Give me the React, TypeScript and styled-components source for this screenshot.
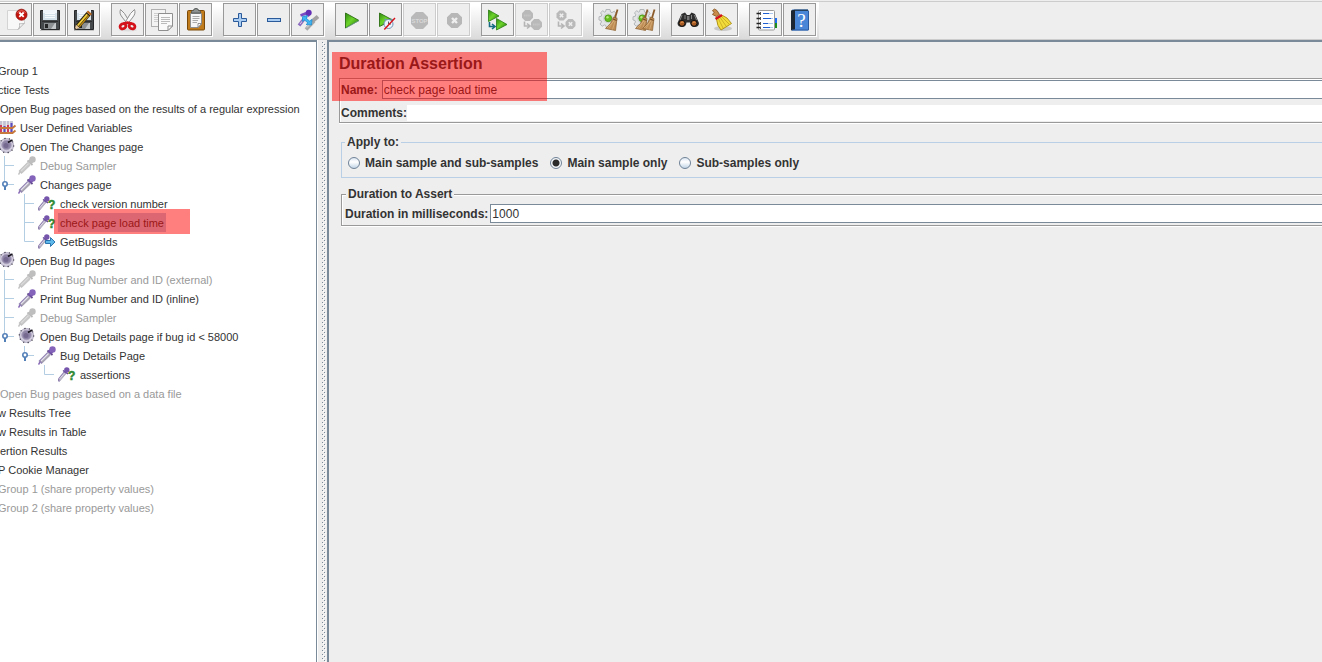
import React, { useId, useState } from 'react';
import styled, { createGlobalStyle, css } from 'styled-components';

const GlobalStyle = createGlobalStyle`
  * { box-sizing: border-box; }
  html, body, #root { height: 100%; }
  body {
    margin: 0;
    overflow: hidden;
    background: #eeeeee;
    color: #333333;
    font-family: 'Liberation Sans', Arial, sans-serif;
    font-size: 12px;
  }
`;

/* ---------- layout ---------- */

const Window = styled.div`
  display: flex;
  flex-direction: column;
  height: 100vh;
  overflow: hidden;
`;

const ToolbarStrip = styled.header`
  display: flex;
  flex: none;
  height: 40px;
  padding-top: 1px;
  border-bottom: 1px solid #cccccc;
`;

const ToolbarEdge = styled.div`
  display: flex;
  flex: 1;
  border-top: 1px solid #cccccc;
`;

const Toolbar = styled.div`
  display: flex;
  gap: 11px;
  margin-left: -1px;
  padding: 1px 3px 0 0;
  background: linear-gradient(#ffffff 10%, #dadada);
`;

const ToolGroup = styled.div`
  display: flex;
  gap: 1px;
`;

const ToolButton = styled.button`
  display: block;
  width: 33px;
  height: 33px;
  padding: 0;
  border: 1px solid #999999;
  background: #eeeeee;
  box-shadow: 1px 1px 0 #ffffff;

  &:disabled { border-color: #cccccc; }
  svg { display: block; }
`;

const Workspace = styled.div`
  display: flex;
  flex: 1;
  min-height: 0;
`;

const TreePane = styled.nav`
  width: 317px;
  flex: none;
  padding-top: 19px;
  overflow: hidden;
  background: #ffffff;
  border-top: 2px solid #7a8a99;
  border-right: 1px solid #7a8a99;
`;

const Divider = styled.div`
  flex: none;
  width: 10px;
  padding: 2px 2px 0 4px;
  border-left: 1px solid #ffffff;
  svg { display: block; width: 4px; height: 100%; }
`;

const EditorPane = styled.main`
  position: relative;
  flex: 1;
  min-width: 0;
  overflow: hidden;
  padding: 13px 0 0 10px;
  border-top: 2px solid #7a8a99;
  border-left: 2px solid #7a8a99;
`;

/* ---------- tree ---------- */

const TreeList = styled.ul`
  margin: 0;
  padding: 0;
  list-style: none;
`;

const TreeRow = styled.li`
  position: relative;
  display: flex;
  height: 19px;
  margin-left: -2px;
  svg { display: block; flex: none; }
`;

const TreeLabel = styled.span<{ $dim?: boolean; $selected?: boolean; $clipped?: boolean }>`
  padding: 1px 2px 0 ${p => (p.$clipped ? 0 : 2)}px;
  font-size: 11px;
  line-height: 18px;
  white-space: nowrap;
  color: ${p => (p.$dim ? '#999999' : '#333333')};
  background: ${p => (p.$selected ? '#b8cfe5' : 'transparent')};
`;

const Marker = styled.div<{ $place: 'tree' | 'form' }>`
  position: absolute;
  pointer-events: none;
  background: rgba(255, 0, 0, 0.5);
  ${p => p.$place === 'tree'
    ? css`left: 56px; top: -4px; width: 136px; height: 25px;`
    : css`left: 3px; top: 10px; width: 215px; height: 49px;`}
`;

/* ---------- form ---------- */

const Title = styled.h1`
  margin: 0 0 5px;
  font-size: 16px;
  line-height: 18px;
  font-weight: bold;
`;

const Form = styled.form`
  margin-right: -8px;
  font-weight: bold;
`;

const NameBox = styled.div`
  display: flex;
  flex-direction: column;
  gap: 6px;
  padding: 1px;
  border: 1px solid #999999;
  box-shadow: 0 1px 0 #ffffff, inset 1px 1px 0 #ffffff;
`;

const Line = styled.div<{ $gap: number }>`
  display: flex;
  align-items: center;
  gap: ${p => p.$gap}px;
`;

const TextInput = styled.input<{ $bare?: boolean }>`
  flex: 1;
  min-width: 0;
  height: ${p => (p.$bare ? 16 : 19)}px;
  padding: 0 1px;
  border: ${p => (p.$bare ? '0' : '1px solid #7a8a99')};
  border-radius: 0;
  outline: 0;
  background: #ffffff;
  color: #333333;
  font: 12px 'Liberation Sans', Arial, sans-serif;
`;

const Group = styled.fieldset<{ $etched?: boolean }>`
  min-width: 0;
  margin: ${p => (p.$etched ? '9px 0 0 2px' : '12px 0 0 2px')};
  padding: ${p => (p.$etched ? '3px 3px 2px' : '7px 6px 7px')};
  border: 1px solid ${p => (p.$etched ? '#999999' : '#b8cfe5')};
  ${p => p.$etched && css`box-shadow: 0 1px 0 #ffffff, inset 1px 1px 0 #ffffff;`}
`;

const Legend = styled.legend<{ $inset: number }>`
  margin-left: ${p => p.$inset}px;
  padding: 0 2px;
  line-height: 14px;
  background: #eeeeee;
`;

const RadioRow = styled.div`
  display: flex;
  gap: 12px;
`;

const RadioLabel = styled.label`
  display: flex;
  align-items: center;
  gap: 5px;
  line-height: 14px;
`;

const Radio = styled.input`
  appearance: none;
  width: 12px;
  height: 12px;
  margin: 0;
  border: 1px solid #6f8296;
  border-radius: 50%;
  background: linear-gradient(#dbe6f2, #ffffff 40%, #c2d5e8);

  &:checked {
    background: radial-gradient(circle, #2b2b2b 3px, #f4f7fa 4px);
  }
`;

/* ---------- toolbar drawings ---------- */

const Art = ({ children }: { children: React.ReactNode }) => (
  <svg width="31" height="31" viewBox="0 0 31 31" fill="none" aria-hidden="true">{children}</svg>
);

const GreenGradient = ({ id }: { id: string }) => (
  <linearGradient id={id} x1="0" y1="0" x2="1" y2="1">
    <stop offset="0" stopColor="#2f8a10" />
    <stop offset="0.45" stopColor="#6cd42a" />
    <stop offset="1" stopColor="#1d6a08" />
  </linearGradient>
);

const NewDoc = () => (
  <Art>
    <path d="M7.500 6.500H24.500V19L18 25.500H7.500Z" fill="#f8f8f8" stroke="#d4d4d4" />
    <path d="M24.500 19C23 20 21 20 19.500 19.500C20 22 19.500 24 18 25.500Z" fill="#ffffff" stroke="#b5b5b5" />
    <circle cx="21.500" cy="10.700" r="5.500" fill="#c4140c" stroke="#8e0d08" strokeWidth="0.800" />
    <path d="M17.500 8.500Q21.500 5 25.500 8.500" stroke="#e8776f" />
    <path d="M19.300 8.500L23.700 12.900M23.700 8.500L19.300 12.900" stroke="#ffffff" strokeWidth="1.800" />
  </Art>
);

const FloppyShape = () => (
  <>
    <path d="M6.500 6.500H25.500V25.500H7.500L6.500 24.500Z" fill="#46494c" stroke="#26282a" />
    <rect x="9" y="6" width="14" height="10" fill="#d5e2ec" />
    <rect x="9" y="6" width="14" height="3" fill="#eff5fa" />
    <path d="M11 9.500H21M11 11.500H21M11 13.500H21" stroke="#f6fafc" />
    <path d="M8 17.500H24" stroke="#2c2e30" />
    <rect x="10" y="19" width="12" height="6" fill="#8d9093" />
    <path d="M17 25L21 19H22V25Z" fill="#c4c7c9" />
    <rect x="11" y="20" width="3" height="4" fill="#222426" />
    <path d="M6 26.500H26" stroke="#c4c4c4" />
  </>
);

const Pencil = () => (
  <>
    <path d="M6.500 26L8 20.500L18.500 8L22.500 11.500L12 23.500Z" fill="#2c2410" />
    <path d="M9 21L18.500 9.700L20 11L10.200 22.300Z" fill="#f4cf3a" />
    <path d="M10.700 22.600L20.300 11.200L21.300 12L12 23Z" fill="#c08a14" />
    <path d="M18.500 8L20 6.500L24 10L22.500 11.500Z" fill="#b5651d" />
    <path d="M6.500 26L8 20.800L11.500 23.700Z" fill="#e8c9a0" />
    <path d="M6.300 26.300L7 24L8.700 25.300Z" fill="#222222" />
  </>
);

const Scissors = () => (
  <Art>
    <ellipse cx="16" cy="26" rx="9" ry="1.500" fill="#dddddd" />
    <path d="M8.500 5.500C7.500 8 8 10.500 10 13L15.500 20L18 18.500L12.500 9.500Z" fill="#f2f2f2" stroke="#8f8f8f" />
    <path d="M22.500 5.500C23.500 8 23 10.500 21 13L15.500 20L13 18.500L18.500 9.500Z" fill="#fafafa" stroke="#8f8f8f" />
    <ellipse cx="11" cy="22.300" rx="3" ry="2.500" transform="rotate(-25 11 22.300)" stroke="#d3121a" strokeWidth="2.800" />
    <ellipse cx="20" cy="22.300" rx="3" ry="2.500" transform="rotate(25 20 22.300)" stroke="#d3121a" strokeWidth="2.800" />
    <path d="M11.500 19.500L15.500 18.500L19.500 19.500" stroke="#d3121a" strokeWidth="2.600" />
  </Art>
);

const Copy = () => (
  <Art>
    <rect x="5.500" y="5.500" width="14" height="17" fill="#f4f4f4" stroke="#b0b0b0" />
    <path d="M8 9.500H17M8 11.500H17M8 13.500H12M8 15.500H12M8 17.500H12" stroke="#cfcfcf" />
    <path d="M12.500 9.500H26.500V22L22 26.500H12.500Z" fill="#fafafa" stroke="#8f8f8f" />
    <path d="M15 13.500H24M15 15.500H24M15 17.500H24M15 19.500H21" stroke="#bbbbbb" />
    <path d="M26.500 22H22V26.500Z" fill="#ffffff" stroke="#8f8f8f" />
  </Art>
);

const Paste = () => (
  <Art>
    <rect x="7.500" y="6.500" width="17" height="19.500" rx="1" fill="#c07c1c" stroke="#7c4a08" />
    <path d="M10.500 9.500H21.500V20L18 23.500H10.500Z" fill="#f6f6f6" stroke="#8d8d8d" />
    <path d="M12.500 12.500H19.500M12.500 14.500H19.500M12.500 16.500H18M12.500 18.500H17" stroke="#aaaaaa" />
    <path d="M21.500 19.500H18V23.500Z" fill="#ffffff" stroke="#777777" strokeWidth="0.800" />
    <path d="M11.500 9V7.500Q11.500 6.500 13.500 6.500Q13.500 4.500 16 4.500Q18.500 4.500 18.500 6.500Q20.500 6.500 20.500 7.500V9Z" fill="#8e9290" stroke="#565a58" />
  </Art>
);

const Plus = () => (
  <Art>
    <path d="M14.500 9.500H17.500V14.500H22.500V17.500H17.500V22.500H14.500V17.500H9.500V14.500H14.500Z" fill="#a9cdf2" stroke="#2a5a9a" />
  </Art>
);

const Minus = () => (
  <Art><rect x="9.500" y="14.500" width="13" height="3" fill="#a9cdf2" stroke="#2a5a9a" /></Art>
);

const Toggle = () => (
  <Art>
    <path d="M7 21.500L14 12.500" stroke="#8d6dc0" strokeWidth="3.400" />
    <path d="M8 20L13 14" stroke="#d9cdea" />
    <path d="M8.500 11.500L13.500 9.500L17.500 12" stroke="#7a4cc4" strokeWidth="2.600" />
    <circle cx="16.700" cy="8.700" r="3" fill="#6330b5" />
    <path d="M14 25.500L22 17" stroke="#a9a9a9" strokeWidth="3.600" />
    <path d="M15 23.500L20 18" stroke="#dedede" />
    <path d="M20 17.500L26 12.500" stroke="#a2a2a2" strokeWidth="4" />
    <path d="M10.500 12.500L15.500 11.500L14.500 14.500L17.500 17L20 15.500L19.500 21L14 20.500L16 19L12.500 16L10.500 17.500Z" fill="#3cb4f2" stroke="#1787cf" strokeWidth="0.700" />
  </Art>
);

const Play = () => {
  const id = useId();
  return (
    <Art>
      <defs><GreenGradient id={id} /></defs>
      <path d="M9.500 9L23 16.500L9.500 24Z" fill={`url(#${id})`} stroke="#2a6d12" strokeWidth="0.900" strokeLinejoin="round" />
      <path d="M23 16.500L10 24" stroke="#88b4c0" strokeWidth="0.600" />
    </Art>
  );
};

const PlayNoTimers = () => {
  const id = useId();
  return (
    <Art>
      <defs><GreenGradient id={id} /></defs>
      <path d="M9.500 9L22.500 16L9.500 22.500Z" fill={`url(#${id})`} stroke="#2a6d12" strokeWidth="0.900" strokeLinejoin="round" />
      <circle cx="18.500" cy="20" r="4.500" fill="#eef4fb" stroke="#6d93b8" />
      <path d="M14.500 16L16 15M21 15L22.500 16" stroke="#6d93b8" strokeWidth="1.500" />
      <path d="M18.500 17.500V20H21" stroke="#333333" strokeWidth="0.800" />
      <path d="M14.300 25.500L25 14" stroke="#d8121a" strokeWidth="1.400" />
    </Art>
  );
};

const octagon = (cx: number, cy: number, r: number) => {
  const k = r * 0.42;
  return `M${cx - k} ${cy - r}H${cx + k}L${cx + r} ${cy - k}V${cy + k}L${cx + k} ${cy + r}H${cx - k}L${cx - r} ${cy + k}V${cy - k}Z`;
};

const StopArt = () => (
  <Art>
    <path d={octagon(15.5, 16.5, 8.5)} fill="#b9b9b9" />
    <text x="15.500" y="19" textAnchor="middle" fontSize="6" fontWeight="bold" fill="#d8d8d8" fontFamily="Liberation Sans">STOP</text>
  </Art>
);

const Shutdown = () => (
  <Art>
    <path d={octagon(16.5, 16.5, 7.5)} fill="#b7b7b7" />
    <path d="M14 14L19 19M19 14L14 19" stroke="#eeeeee" strokeWidth="2.400" />
  </Art>
);

const ElbowArrow = ({ color, x = 7.5, y = 18 }: { color: string; x?: number; y?: number }) => (
  <path d={`M${x} ${y}V${y + 4.5}H${x + 5}M${x + 2.5} ${y + 2}L${x + 5.5} ${y + 4.5}L${x + 2.5} ${y + 7}`} stroke={color} strokeWidth="1.600" />
);

const RemoteStart = () => {
  const id = useId();
  return (
    <Art>
      <defs><GreenGradient id={id} /></defs>
      <path d="M6.500 6L17 12L6.500 17.500Z" fill={`url(#${id})`} stroke="#2a7d12" strokeWidth="0.800" />
      <path d="M14.500 14.500L25 20.500L14.500 26Z" fill={`url(#${id})`} stroke="#2a7d12" strokeWidth="0.800" />
      <ElbowArrow color="#156b80" />
    </Art>
  );
};

const RemoteStop = () => (
  <Art>
    <path d={octagon(11.5, 11.5, 5.5)} fill="#b9b9b9" />
    <path d={octagon(20.5, 20.5, 5.5)} fill="#b9b9b9" />
    <path d="M8 11.500H15M17 20.500H24" stroke="#c6c6c6" strokeWidth="2" strokeDasharray="1.500 0.600" />
    <ElbowArrow color="#b5b5b5" x={8.5} y={17.5} />
  </Art>
);

const RemoteShutdown = () => (
  <Art>
    <path d={octagon(11.5, 11.5, 5)} fill="#b9b9b9" />
    <path d={octagon(20.5, 20, 5)} fill="#b9b9b9" />
    <path d="M9.800 9.800L13.200 13.200M13.200 9.800L9.800 13.200M18.800 18.300L22.200 21.700M22.200 18.300L18.800 21.700" stroke="#eeeeee" strokeWidth="1.600" />
    <ElbowArrow color="#b5b5b5" x={8.5} y={17.5} />
  </Art>
);

const Gear = () => (
  <>
    <path
      d="M12 5.500H16L16.500 8L18 8.600L20.300 7.200L22 9.500L20.600 11.500L21 13L23 13.500V16L20.800 16.600L20 18.300L21.300 20.300L19 22.500L17 21L15.800 21.500L15.300 23.500H12.300L11.800 21.500L10.300 20.900L8.200 22.300L6 20L7.500 18L7 16.500L5 16V12.800L7.200 12.300L7.800 10.800L6.500 8.800L8.800 6.700L10.600 8.100L11.600 7.600Z"
      fill="#e2e4e5" stroke="#b3b6b8"
    />
    <circle cx="14" cy="14.300" r="5" fill="#d0d3d4" />
    <circle cx="14.300" cy="14.300" r="3.400" fill="#66bd1e" stroke="#4a9412" strokeWidth="0.800" />
    <circle cx="13.500" cy="13.300" r="1.200" fill="#b7ea7c" />
  </>
);

const BroomHead = () => (
  <>
    <path d="M23.500 5.500L21 14" stroke="#8b5a2b" strokeWidth="1.800" />
    <path d="M19.500 13L23 14.500L21.500 26.500L11.500 24.500Q17.500 20 19.500 13Z" fill="#bd8d55" stroke="#8a5d2c" strokeWidth="0.700" />
    <path d="M20.500 15L15 24.500M21.500 16L18.500 25.500M20 17L13 24" stroke="#dbb27c" strokeWidth="0.700" />
    <path d="M19 15L22.500 16.500" stroke="#6d441c" />
  </>
);

const Clear = () => <Art><Gear /><BroomHead /></Art>;
const ClearAll = () => (
  <Art>
    <Gear />
    <g transform="translate(-4 0)"><BroomHead /></g>
    <g transform="translate(3 0)"><BroomHead /></g>
  </Art>
);

const Binoculars = () => (
  <Art>
    <path d="M9.500 10L13 8.500L15 11H17.500L19.500 8.500L23 10L27 19Q27 23 22.500 23Q18.500 23 18 18.500H14.500Q14 23 10 23Q5.500 23 5.500 19Z" fill="#2e2e2e" />
    <path d="M10 11L8 16M22.500 11L24.500 16M13 11V15M19.500 11V15" stroke="#858585" />
    <circle cx="10" cy="19.300" r="3" fill="#a65a22" stroke="#111111" />
    <circle cx="22" cy="19.300" r="3" fill="#a65a22" stroke="#111111" />
    <path d="M8.500 19Q10 17 11.500 18.500M20.500 19Q22 17 23.500 18.500" stroke="#e89a55" />
    <rect x="15" y="12" width="2.500" height="4" fill="#777777" />
  </Art>
);

const Sweep = () => (
  <Art>
    <ellipse cx="17" cy="24.500" rx="9" ry="2.500" fill="#c8c8c8" />
    <path d="M6.500 6.500L8.500 5L11 6.500L13.500 10.500L10.500 12.500L6.500 10.500L8 8.500Z" fill="#c98b4a" stroke="#7f4f1c" strokeWidth="0.800" />
    <path d="M10.500 15L16.500 11.500L21 14L25.500 19.500L15 26Q11 22 10.500 15Z" fill="#f2dc3c" stroke="#a98b10" strokeWidth="0.900" />
    <path d="M12.500 15L17 24M14.500 14L20 22M16 13L23 20" stroke="#c3a51e" strokeWidth="0.800" />
    <path d="M9.500 15L16 11" stroke="#d3121a" strokeWidth="2.600" />
  </Art>
);

const ListArt = () => (
  <Art>
    <rect x="24" y="14" width="3" height="5" fill="#1e6cf0" />
    <rect x="24" y="19" width="3" height="5" fill="#1c8c1c" />
    <rect x="8.500" y="6.500" width="16" height="19.500" rx="1" fill="#ffffff" stroke="#9a9a9a" />
    <path d="M13 9.500H23M13 14.500H23M13 19.500H23M13 23.500H23" stroke="#aac6ee" />
    <path d="M13 9.500H19M13 14.500H21M13 19.500H18M13 23.500H20" stroke="#1f5fd0" strokeWidth="1.200" />
    <path d="M6.500 9.500H10M6.500 14.500H10M6.500 19.500H10M6.500 23.500H10" stroke="#222222" strokeWidth="1.500" />
    <path d="M10.500 8V11M10.500 13V16M10.500 18V21M10.500 22.500V25" stroke="#555555" />
  </Art>
);

const HelpArt = () => (
  <Art>
    <path d="M8 5.500H24V26.500H8Z" fill="#4a86d8" />
    <path d="M7 6.500L11 5.500V25.500L7 26.500Z" fill="#1c2733" />
    <path d="M11 5.500H24V7H11Z" fill="#23415f" />
    <path d="M8 26H24.500V6.500" stroke="#2b5aa0" />
    <text x="17.500" y="22.500" textAnchor="middle" fontSize="19" fill="#ffffff" fontFamily="Liberation Serif">?</text>
  </Art>
);

type Tool = { name: string; art: React.ReactNode; off?: boolean };

const toolGroups: Tool[][] = [
  [
    { name: 'Close', art: <NewDoc /> },
    { name: 'Save', art: <Art><FloppyShape /></Art> },
    { name: 'Save as', art: <Art><FloppyShape /><Pencil /></Art> },
  ],
  [
    { name: 'Cut', art: <Scissors /> },
    { name: 'Copy', art: <Copy /> },
    { name: 'Paste', art: <Paste /> },
  ],
  [
    { name: 'Expand all', art: <Plus /> },
    { name: 'Collapse all', art: <Minus /> },
    { name: 'Toggle', art: <Toggle /> },
  ],
  [
    { name: 'Start', art: <Play /> },
    { name: 'Start no pauses', art: <PlayNoTimers /> },
    { name: 'Stop', art: <StopArt />, off: true },
    { name: 'Shutdown', art: <Shutdown />, off: true },
  ],
  [
    { name: 'Remote start all', art: <RemoteStart /> },
    { name: 'Remote stop all', art: <RemoteStop />, off: true },
    { name: 'Remote shutdown all', art: <RemoteShutdown />, off: true },
  ],
  [
    { name: 'Clear', art: <Clear /> },
    { name: 'Clear all', art: <ClearAll /> },
  ],
  [
    { name: 'Search', art: <Binoculars /> },
    { name: 'Reset search', art: <Sweep /> },
  ],
  [
    { name: 'Function helper', art: <ListArt /> },
    { name: 'Help', art: <HelpArt /> },
  ],
];

/* ---------- tree drawings ---------- */

type GuideKind = 'blank' | 'tee' | 'end' | 'handle';

const Guide = ({ kind }: { kind: GuideKind }) => (
  <svg width="20" height="19" viewBox="0 0 20 19" fill="none" aria-hidden="true">
    {kind === 'tee' && <path d="M6.500 0V19M6.500 9.500H16" stroke="#b3cde3" />}
    {kind === 'end' && <path d="M6.500 0V9.500H16" stroke="#b3cde3" />}
    {kind === 'handle' && (
      <>
        <path d="M6.500 0V7M9 9.500H16" stroke="#b3cde3" />
        <circle cx="7" cy="9" r="2.200" fill="#ffffff" stroke="#5480b8" strokeWidth="1.600" />
        <path d="M7 11V15" stroke="#5480b8" strokeWidth="2" />
      </>
    )}
  </svg>
);

const Dropper = ({ gray }: { gray?: boolean }) => (
  <>
    <path d="M0.500 18.500L2 16" stroke={gray ? '#c4c4c4' : '#8a6db8'} strokeWidth="1.500" />
    <path d="M2 16.500L11 7.500" stroke={gray ? '#c2c2c2' : '#8f7fb0'} strokeWidth="4.200" />
    <path d="M3.500 16L11.500 8.500" stroke={gray ? '#c8c8c8' : '#aaa6b2'} strokeWidth="2.600" />
    <path d="M3 15L10.500 7.500" stroke={gray ? '#dadada' : '#e6e2ee'} strokeWidth="1.200" />
    <path d="M9.500 4.500L14.500 9" stroke={gray ? '#b6b6b6' : '#5d4688'} strokeWidth="1.800" />
    <path d="M11.500 7L14.500 3.500" stroke={gray ? '#bcbcbc' : '#7352a8'} strokeWidth="4.500" />
    <circle cx="14.500" cy="3.400" r="3.200" fill={gray ? '#bebebe' : '#8464bb'} />
  </>
);

const MiniDropper = () => (
  <>
    <path d="M0 16L7 7.500" stroke="#8f7fb0" strokeWidth="3" />
    <path d="M1.500 15.500L7.500 8.500" stroke="#b9b5c2" strokeWidth="1.600" />
    <path d="M1.500 14L6.500 8" stroke="#e4e0ec" />
    <path d="M5 5.500L10 9" stroke="#5f4590" strokeWidth="1.400" />
    <circle cx="8.800" cy="5" r="2.700" fill="#7556ac" />
  </>
);

type IconKind = 'vars' | 'controller' | 'sampler' | 'samplerOff' | 'assertion' | 'extractor';

const NodeIcon = ({ kind }: { kind: IconKind }) => (
  <svg width="20" height="19" viewBox="0 0 20 19" fill="none" aria-hidden="true">
    {kind === 'vars' && (
      <>
        <path d="M3 3V15M6.500 3V15M10 3V15M13.500 3V15" stroke="#c3c3d4" strokeWidth="2.800" />
        <path d="M3 7V14M10 7V14" stroke="#cf3b5c" strokeWidth="2" />
        <path d="M6.500 8V14M13.500 5V14" stroke="#5a4bc0" strokeWidth="2" />
        <path d="M0 10H14.500L17.500 7.500M0 15H14.500L17.500 12.500" stroke="#c7783c" strokeWidth="2" />
      </>
    )}
    {kind === 'controller' && (
      <>
        <circle cx="8.500" cy="8.500" r="7" fill="#d3cede" stroke="#b3acc4" />
        <circle cx="8.500" cy="8.500" r="7.200" stroke="#26222e" strokeWidth="1.200" strokeDasharray="1 3.520" />
        <circle cx="8.500" cy="8" r="4.700" fill="#8e84a6" stroke="#a9a0bc" />
        <circle cx="8" cy="8.500" r="2.500" fill="#75698f" />
        <path d="M10 5.500L11.500 4.500L14.500 3" stroke="#17141d" strokeWidth="1.600" />
      </>
    )}
    {kind === 'sampler' && <Dropper />}
    {kind === 'samplerOff' && <Dropper gray />}
    {kind === 'assertion' && (
      <>
        <MiniDropper />
        <text x="10" y="15" fontSize="12" fontWeight="bold" fill="#2f8a34" stroke="#2f8a34" strokeWidth="0.500" fontFamily="Liberation Sans">?</text>
      </>
    )}
    {kind === 'extractor' && (
      <>
        <MiniDropper />
        <path d="M7.500 8.500H12.500V5.500L17 10L12.500 14.500V11.500H7.500Z" fill="#5fb8ea" stroke="#1c6aa8" strokeWidth="0.900" />
      </>
    )}
  </svg>
);

type Node = { text: string; guides?: GuideKind[]; icon?: IconKind; dim?: boolean; clipped?: boolean; selected?: boolean };

const nodes: Node[] = [
  { text: 'Group 1', clipped: true },
  { text: 'ctice Tests', clipped: true },
  { text: 'Open Bug pages based on the results of a regular expression' },
  { text: 'User Defined Variables', icon: 'vars' },
  { text: 'Open The Changes page', icon: 'controller' },
  { text: 'Debug Sampler', guides: ['tee'], icon: 'samplerOff', dim: true },
  { text: 'Changes page', guides: ['handle'], icon: 'sampler' },
  { text: 'check version number', guides: ['blank', 'tee'], icon: 'assertion' },
  { text: 'check page load time', guides: ['blank', 'tee'], icon: 'assertion', selected: true },
  { text: 'GetBugsIds', guides: ['blank', 'end'], icon: 'extractor' },
  { text: 'Open Bug Id pages', icon: 'controller' },
  { text: 'Print Bug Number and ID (external)', guides: ['tee'], icon: 'samplerOff', dim: true },
  { text: 'Print Bug Number and ID (inline)', guides: ['tee'], icon: 'sampler' },
  { text: 'Debug Sampler', guides: ['tee'], icon: 'samplerOff', dim: true },
  { text: 'Open Bug Details page if bug id < 58000', guides: ['handle'], icon: 'controller' },
  { text: 'Bug Details Page', guides: ['blank', 'handle'], icon: 'sampler' },
  { text: 'assertions', guides: ['blank', 'blank', 'end'], icon: 'assertion' },
  { text: 'Open Bug pages based on a data file', dim: true },
  { text: 'w Results Tree', clipped: true },
  { text: 'w Results in Table', clipped: true },
  { text: 'ertion Results' },
  { text: 'P Cookie Manager', clipped: true },
  { text: 'Group 1 (share property values)', dim: true, clipped: true },
  { text: 'Group 2 (share property values)', dim: true, clipped: true },
];

const scopes = ['Main sample and sub-samples', 'Main sample only', 'Sub-samples only'];

export default function App() {
  const [scope, setScope] = useState(scopes[1]);
  const bumps = useId();

  return (
    <Window>
      <GlobalStyle />
      <ToolbarStrip>
        <ToolbarEdge>
          <Toolbar role="toolbar">
            {toolGroups.map((group, i) => (
              <ToolGroup key={i}>
                {group.map(t => (
                  <ToolButton key={t.name} type="button" aria-label={t.name} disabled={t.off}>{t.art}</ToolButton>
                ))}
              </ToolGroup>
            ))}
          </Toolbar>
        </ToolbarEdge>
      </ToolbarStrip>

      <Workspace>
        <TreePane>
          <TreeList>
            {nodes.map((n, i) => (
              <TreeRow key={i}>
                {n.guides?.map((g, k) => <Guide key={k} kind={g} />)}
                {n.icon && <NodeIcon kind={n.icon} />}
                <TreeLabel $dim={n.dim} $selected={n.selected} $clipped={n.clipped}>{n.text}</TreeLabel>
                {n.selected && <Marker $place="tree" />}
              </TreeRow>
            ))}
          </TreeList>
        </TreePane>

        <Divider>
          <svg aria-hidden="true">
            <defs>
              <pattern id={bumps} width="4" height="4" patternUnits="userSpaceOnUse">
                <rect x="0" y="0" width="1" height="1" fill="#7a8a99" />
                <rect x="2" y="2" width="1" height="1" fill="#7a8a99" />
                <rect x="1" y="1" width="1" height="1" fill="#ffffff" />
                <rect x="3" y="3" width="1" height="1" fill="#ffffff" />
              </pattern>
            </defs>
            <rect width="4" height="100%" fill={`url(#${bumps})`} />
          </svg>
        </Divider>

        <EditorPane>
          <Title>Duration Assertion</Title>
          <Form onSubmit={e => e.preventDefault()}>
            <NameBox>
              <Line $gap={4}>
                <label htmlFor="name">Name:</label>
                <TextInput id="name" defaultValue="check page load time" />
              </Line>
              <Line $gap={0}>
                <label htmlFor="comments">Comments:</label>
                <TextInput id="comments" $bare />
              </Line>
            </NameBox>

            <Group>
              <Legend $inset={-3}>Apply to:</Legend>
              <RadioRow>
                {scopes.map(s => (
                  <RadioLabel key={s}>
                    <Radio type="radio" name="scope" checked={scope === s} onChange={() => setScope(s)} />
                    {s}
                  </RadioLabel>
                ))}
              </RadioRow>
            </Group>

            <Group $etched>
              <Legend $inset={1}>Duration to Assert</Legend>
              <Line $gap={2}>
                <label htmlFor="duration">Duration in milliseconds:</label>
                <TextInput id="duration" defaultValue="1000" />
              </Line>
            </Group>
          </Form>
          <Marker $place="form" />
        </EditorPane>
      </Workspace>
    </Window>
  );
}
